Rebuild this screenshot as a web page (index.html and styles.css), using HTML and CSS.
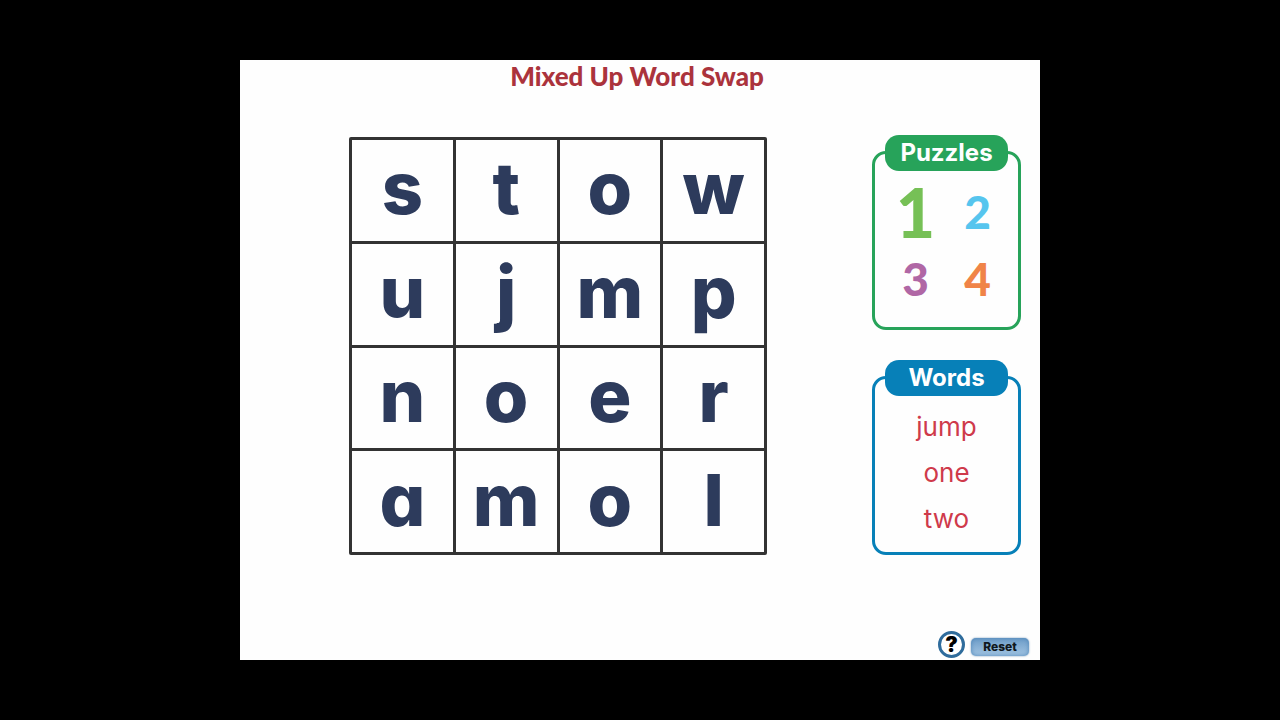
FILE: index.html
```html
<!DOCTYPE html>
<html lang="en">
<head>
    <meta charset="UTF-8">
    <meta name="viewport" content="width=device-width, initial-scale=1">
    <title>Mixed Up Word Swap</title>
    <link rel="stylesheet" href="styles.css">
</head>
<body>
    <div class="stage">
        <h1 class="title">Mixed Up Word Swap</h1>

        <main class="game">
            <div class="board">
                <button class="tile">s</button>
                <button class="tile">t</button>
                <button class="tile">o</button>
                <button class="tile">w</button>
                <button class="tile">u</button>
                <button class="tile">j</button>
                <button class="tile">m</button>
                <button class="tile">p</button>
                <button class="tile">n</button>
                <button class="tile">o</button>
                <button class="tile">e</button>
                <button class="tile">r</button>
                <button class="tile">a</button>
                <button class="tile">m</button>
                <button class="tile">o</button>
                <button class="tile">l</button>
            </div>

            <div class="sidebar">
                <section class="panel puzzles">
                    <h2 class="panel-title">Puzzles</h2>
                    <div class="numbers">
                        <button class="number one active">1</button>
                        <button class="number two">2</button>
                        <button class="number three">3</button>
                        <button class="number four">4</button>
                    </div>
                </section>
                <section class="panel words">
                    <h2 class="panel-title">Words</h2>
                    <ul class="word-list">
                        <li>jump</li>
                        <li>one</li>
                        <li>two</li>
                    </ul>
                </section>
            </div>
        </main>

        <footer class="controls">
            <button class="help">?</button>
            <button class="reset">Reset</button>
        </footer>
    </div>
</body>
</html>
```
FILE: styles.css
```css
* {
    box-sizing: border-box;
}

body {
    margin: 0;
    min-height: 100vh;
    display: flex;
    align-items: center;
    justify-content: center;
    background-color: #000;
    font-family: Inter, "Liberation Sans", sans-serif;
    font-feature-settings: "cv11"; /* single-storey a */
}

button {
    padding: 0;
    border: none;
    background: none;
    font-family: inherit;
    font-feature-settings: inherit;
    cursor: pointer;
}

.stage {
    display: flex;
    flex-direction: column;
    width: 100%;
    max-width: 800px;
    min-height: 600px;
    background-color: #fefefe;
}

.title {
    margin: 0;
    padding-right: 6px;
    font-family: Lato, sans-serif;
    font-size: 26px;
    font-weight: 900;
    line-height: 32px;
    text-align: center;
    color: #ab333c;
}

.game {
    display: flex;
    align-items: flex-end;
    justify-content: space-between;
    gap: 24px;
    padding: 43px 19px 0 109px;
}

/* the gaps show the dark background as grid lines */
.board {
    display: grid;
    grid-template-columns: repeat(4, 1fr);
    gap: 3px;
    flex: 0 1 418px;
    padding: 3px;
    border-radius: 2px;
    background-color: #333;
}

.tile {
    aspect-ratio: 1;
    padding-bottom: 4px;
    background-color: #fefefe;
    color: #2d3b5c;
    font-size: 72px;
    font-weight: 800;
    font-optical-sizing: none;
    line-height: 72px;
}

.sidebar {
    display: flex;
    flex-direction: column;
    gap: 30px;
    flex: 0 0 149px;
}

.panel {
    display: flex;
    flex-direction: column;
    align-items: center;
    height: 179px;
    margin-top: 16px;
    border: 3px solid;
    border-radius: 14px;
}

.panel-title {
    width: 123px;
    margin: -19px 0 0;
    border-radius: 14px;
    font-size: 24px;
    font-weight: 700;
    line-height: 36px;
    text-align: center;
    color: #fff;
}

.puzzles {
    border-color: #27a35a;
}

.puzzles .panel-title {
    background-color: #27a35a;
}

.words {
    border-color: #0780b8;
}

.words .panel-title {
    background-color: #0780b8;
}

.numbers {
    display: grid;
    grid-template-columns: 1fr 1fr;
    grid-template-rows: 82px 52px;
    align-items: center;
    width: 124px;
}

.number {
    font-family: Lato, sans-serif;
    font-size: 46px;
    font-weight: 900;
    line-height: 52px;
}

.number.active {
    font-size: 68px;
}

.one {
    color: #76c056;
}

.two {
    color: #56c5ee;
}

.three {
    color: #b067a5;
}

.four {
    color: #f08448;
}

.word-list {
    margin: 0;
    padding: 8px 0 0;
    list-style: none;
    text-align: center;
    font-size: 26px;
    line-height: 46px;
    color: #cf3a4b;
}

.controls {
    display: flex;
    align-items: flex-end;
    justify-content: flex-end;
    gap: 6px;
    margin-top: auto;
    padding: 0 11px 2px;
}

.help {
    width: 27px;
    height: 27px;
    border: 3px solid #2f6c9c;
    border-radius: 50%;
    background-color: #fff;
    font-size: 21px;
    font-weight: 900;
    line-height: 21px;
    color: #000;
}

.reset {
    width: 58px;
    height: 18px;
    margin-bottom: 2px;
    border-radius: 5px;
    background: linear-gradient(#6d9cc8, #a3c5e3);
    box-shadow: inset 0 0 4px #4f86b8, 0 0 2px #7096b8;
    font-size: 12px;
    font-weight: 800;
    line-height: 18px;
    color: #101820;
}
```
